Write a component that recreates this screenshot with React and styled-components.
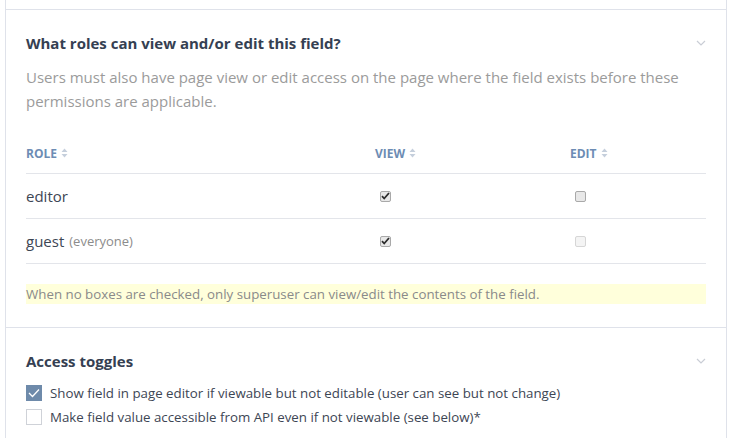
import styled, { createGlobalStyle } from "styled-components";

const Global = createGlobalStyle`
  body {
    margin: 0;
    background: #fff;
    font-family: "Open Sans", "Noto Sans", sans-serif;
    color: #3d4654;
  }
`;

const Panel = styled.div`
  margin-left: 5px;
  width: 720px;
  border-left: 1px solid #dfe2ea;
  border-right: 1px solid #dfe2ea;
`;

const TopCut = styled.div`
  height: 9px;
  border-bottom: 1px solid #dfe2ea;
`;

const Section = styled.section`
  padding: 23px 20px 23px 20px;
  border-bottom: ${(p) => (p.$last ? "none" : "1px solid #dfe2ea")};
`;

const Head = styled.div`
  display: flex;
  align-items: center;
  justify-content: space-between;
  height: 20px;
`;

const Title = styled.h3`
  margin: 0;
  font-size: 15px;
  font-weight: 700;
  color: #354052;
`;

const Desc = styled.p`
  margin: 12px 0 0;
  font-size: 15px;
  line-height: 24px;
  color: #9b9b9b;
`;

const Grid = styled.div`
  display: grid;
  grid-template-columns: 349px 195px 1fr;
  margin-top: 20px;
`;

const HeadCell = styled.div`
  height: 40px;
  display: flex;
  align-items: center;
  gap: 4px;
  font-size: 12px;
  font-weight: 700;
  color: #6d8cb4;
  border-bottom: 1px solid #e3e5ea;
`;

const Cell = styled.div`
  height: 44px;
  display: flex;
  align-items: center;
  padding-left: ${(p) => (p.$box ? 5 : 0)}px;
  font-size: 15px;
  color: #3d4654;
  border-bottom: 1px solid #e3e5ea;
`;

const Muted = styled.span`
  font-size: 13px;
  color: #8c8c8c;
  margin-left: 5px;
`;

const MiniBox = styled.span`
  width: 11px;
  height: 11px;
  box-sizing: border-box;
  border: 1px solid ${(p) => (p.$faded ? "#d6d6d6" : "#a9a9a9")};
  border-radius: 2px;
  background: ${(p) => (p.$faded ? "#f4f4f4" : "#e8e8e8")};
  display: flex;
  align-items: center;
  justify-content: center;
`;

const Note = styled.div`
  margin-top: 20px;
  height: 20px;
  display: flex;
  align-items: center;
  background: #ffffdb;
  font-size: 13.3px;
  color: #8a8a8a;
`;

const Toggles = styled.div`
  margin-top: 10px;
  display: flex;
  flex-direction: column;
`;

const ToggleRow = styled.label`
  height: 24px;
  display: flex;
  align-items: center;
  gap: 8px;
  font-size: 13.3px;
  color: #3d4654;
`;

const Box = styled.span`
  width: 16px;
  height: 16px;
  box-sizing: border-box;
  border: 1px solid ${(p) => (p.$on ? "#6e8aaa" : "#cfd2d8")};
  background: ${(p) => (p.$on ? "#6e8aaa" : "#fff")};
  display: flex;
  align-items: center;
  justify-content: center;
`;

function Chevron() {
  return (
    <svg width="10" height="6" viewBox="0 0 10 6">
      <path d="M1 1l4 4 4-4" fill="none" stroke="#c9cdd5" strokeWidth="1.2" />
    </svg>
  );
}

function Sort() {
  return (
    <svg width="7" height="10" viewBox="0 0 7 10">
      <path d="M3.5 0.5L6.5 4H0.5z M3.5 9.5L6.5 6H0.5z" fill="#c5cfdc" />
    </svg>
  );
}

function Mini({ checked, faded }) {
  return (
    <MiniBox $faded={faded}>
      {checked && (
        <svg width="9" height="8" viewBox="0 0 9 8">
          <path d="M1 4.2l2.2 2.3L8 1" fill="none" stroke="#2b2b2b" strokeWidth="1.8" />
        </svg>
      )}
    </MiniBox>
  );
}

function Check({ on }) {
  return (
    <Box $on={on}>
      {on && (
        <svg width="12" height="10" viewBox="0 0 12 10">
          <path d="M1 5l3.5 3.5L11 1.5" fill="none" stroke="#fff" strokeWidth="1.3" />
        </svg>
      )}
    </Box>
  );
}

const roles = [
  { name: "editor", view: true, edit: false },
  { name: "guest", extra: "(everyone)", view: true, edit: false, faded: true },
];

export default function App() {
  return (
    <>
      <Global />
      <Panel>
        <TopCut />
        <Section>
          <Head>
            <Title>What roles can view and/or edit this field?</Title>
            <Chevron />
          </Head>
          <Desc>
            Users must also have page view or edit access on the page where the field exists before these
            permissions are applicable.
          </Desc>
          <Grid>
            <HeadCell>ROLE <Sort /></HeadCell>
            <HeadCell>VIEW <Sort /></HeadCell>
            <HeadCell>EDIT <Sort /></HeadCell>
            {roles.map((r) => [
              <Cell key={r.name + "n"}>
                {r.name}
                {r.extra && <Muted>{r.extra}</Muted>}
              </Cell>,
              <Cell key={r.name + "v"} $box><Mini checked={r.view} /></Cell>,
              <Cell key={r.name + "e"} $box><Mini checked={r.edit} faded={r.faded} /></Cell>,
            ])}
          </Grid>
          <Note>When no boxes are checked, only superuser can view/edit the contents of the field.</Note>
        </Section>
        <Section $last>
          <Head>
            <Title>Access toggles</Title>
            <Chevron />
          </Head>
          <Toggles>
            <ToggleRow><Check on />Show field in page editor if viewable but not editable (user can see but not change)</ToggleRow>
            <ToggleRow><Check />Make field value accessible from API even if not viewable (see below)*</ToggleRow>
          </Toggles>
        </Section>
      </Panel>
    </>
  );
}
